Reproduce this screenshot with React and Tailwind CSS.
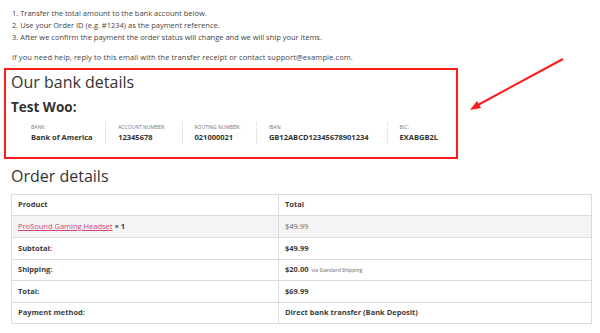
const FONT = { fontFamily: '"Open Sans", "Noto Sans", sans-serif' };

const BANK_FIELDS = [
  { label: 'Bank:', value: 'Bank of America', w: 'w-[75px]' },
  { label: 'Account number:', value: '12345678', w: 'w-[77px]' },
  { label: 'Routing number:', value: '021000021', w: 'w-[75px]' },
  { label: 'IBAN:', value: 'GB12ABCD12345678901234', w: 'w-[132px]' },
  { label: 'BIC:', value: 'EXABGB2L', w: 'w-[70px]' },
];

const ROWS = [
  { label: 'Subtotal:', value: '$49.99' },
  { label: 'Shipping:', value: '$20.00', note: 'via Standard Shipping' },
  { label: 'Total:', value: '$69.99' },
  { label: 'Payment method:', value: 'Direct bank transfer (Bank Deposit)' },
];

export default function App() {
  return (
    <div className="relative w-[600px] h-[333px] overflow-hidden bg-white text-[#3c3c3c]" style={FONT}>
      {/* instructions */}
      <div className="pt-[7px] pl-[12px] text-[7.5px] leading-[12px] text-[#444]">
        <p>1. Transfer the total amount to the bank account below.</p>
        <p>2. Use your Order ID (e.g. #1234) as the payment reference.</p>
        <p>3. After we confirm the payment the order status will change and we will ship your items.</p>
        <p className="mt-[8px] tracking-[0.1px]">If you need help, reply to this email with the transfer receipt or contact support@example.com.</p>
      </div>

      {/* bank details, highlighted */}
      <div className="mt-[5px] ml-[4px] w-[454px] h-[91px] border-2 border-[#ff1a1a] pl-[5px]">
        <h2 className="text-[16px] leading-[22px] mt-[1px] text-[#333]">Our bank details</h2>
        <h3 className="text-[13.5px] leading-[18px] font-bold mt-[5px] text-[#333]">Test Woo:</h3>
        <ul className="flex mt-[6px] pl-[20px]">
          {BANK_FIELDS.map((f, i) => (
            <li
              key={f.label}
              className={`${f.w} flex flex-col ${i > 0 ? 'pl-[12px] border-l border-dotted border-[#cfcfcf]' : ''}`}
            >
              <span className="text-[5px] leading-[8px] uppercase text-[#777] mt-[1px]">{f.label}</span>
              <strong className="text-[7.5px] leading-[12px] font-bold text-[#333] whitespace-nowrap">{f.value}</strong>
            </li>
          ))}
        </ul>
      </div>

      {/* order details */}
      <h2 className="ml-[11px] mt-[5px] text-[16px] leading-[24px] text-[#333]">Order details</h2>
      <table className="ml-[11px] mt-[6px] w-[581px] border-collapse text-[7.5px] text-[#3c3c3c]">
        <tbody>
          <tr className="h-[21px]">
            <th className="w-[267px] border border-[#dcdcdc] text-left pl-[6px] font-bold">Product</th>
            <th className="border border-[#dcdcdc] text-left pl-[6px] font-bold">Total</th>
          </tr>
          <tr className="h-[22px] bg-[#f4f4f4]">
            <td className="border border-[#dcdcdc] pl-[6px]">
              <span className="underline text-[#c9467a]">ProSound Gaming Headset</span>
              <strong className="font-bold"> × 1</strong>
            </td>
            <td className="border border-[#dcdcdc] pl-[6px] text-[#666]">$49.99</td>
          </tr>
          {ROWS.map((r) => (
            <tr key={r.label} className="h-[21.5px]">
              <th className="border border-[#dcdcdc] text-left pl-[6px] font-bold">{r.label}</th>
              <td className="border border-[#dcdcdc] pl-[6px]">
                <span className="font-bold">{r.value}</span>
                {r.note && <small className="text-[5px] text-[#666] ml-[3px]">{r.note}</small>}
              </td>
            </tr>
          ))}
        </tbody>
      </table>

      {/* annotation arrow */}
      <svg className="absolute left-0 top-0 pointer-events-none" width="600" height="333">
        <line x1="563" y1="59" x2="476" y2="106" stroke="#ff1a1a" strokeWidth="2" />
        <polygon points="470,110 477,101 481,108" fill="#ff1a1a" />
      </svg>
    </div>
  );
}
